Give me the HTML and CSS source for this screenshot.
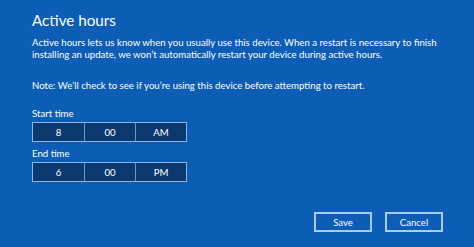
FILE: index.html
```html
<!DOCTYPE html>
<html lang="en">
<head>
<meta charset="utf-8">
<title>Active hours</title>
<link rel="stylesheet" href="styles.css">
</head>
<body>
<div class="page">
  <h1 class="title">Active hours</h1>
  <p class="desc">Active hours lets us know when you usually use this device. When a restart is necessary to finish installing an update, we won’t automatically restart your device during active hours.</p>
  <p class="note">Note: We’ll check to see if you’re using this device before attempting to restart.</p>
  <div class="field">
    <div class="label">Start time</div>
    <div class="picker">
      <div class="cell">8</div>
      <div class="cell">00</div>
      <div class="cell">AM</div>
    </div>
  </div>
  <div class="field field-end">
    <div class="label">End time</div>
    <div class="picker">
      <div class="cell">6</div>
      <div class="cell">00</div>
      <div class="cell">PM</div>
    </div>
  </div>
  <div class="actions">
    <button class="btn">Save</button>
    <button class="btn">Cancel</button>
  </div>
</div>
</body>
</html>
```
FILE: styles.css
```css
html, body {
  margin: 0;
  padding: 0;
}
body {
  background: #0b5db6;
  color: #ffffff;
  font-family: "Lato", "Open Sans", sans-serif;
  width: 474px;
  height: 247px;
  overflow: hidden;
}
.page {
  padding: 10px 31px 0 32px;
  display: flex;
  flex-direction: column;
  height: 237px;
  box-sizing: border-box;
}
.title {
  margin: 0;
  font-size: 15.2px;
  font-weight: 400;
  line-height: 20px;
}
.desc, .note {
  margin: 0;
  font-size: 9.65px;
  line-height: 12px;
}
.desc {
  margin-top: 6px;
}
.note {
  margin-top: 19px;
}
.field {
  margin-top: 16px;
}
.field-end {
  margin-top: 5px;
}
.label {
  font-size: 9.65px;
  line-height: 12px;
}
.picker {
  margin-top: 3px;
  width: 155px;
  height: 20px;
  box-sizing: border-box;
  border: 1px solid #8db6e2;
  background: #0c3a70;
  display: grid;
  grid-template-columns: 1fr 1fr 1fr;
}
.cell {
  display: flex;
  align-items: center;
  justify-content: center;
  font-size: 9.65px;
  border-left: 1px solid #6f98c8;
}
.cell:first-child {
  border-left: none;
}
.actions {
  margin-top: 30px;
  display: flex;
  justify-content: flex-end;
  gap: 13px;
}
.btn {
  width: 58px;
  height: 20px;
  box-sizing: border-box;
  border: 2px solid #a9cdf0;
  background: transparent;
  color: #ffffff;
  font-family: inherit;
  font-size: 9.65px;
  padding: 0;
}
```
